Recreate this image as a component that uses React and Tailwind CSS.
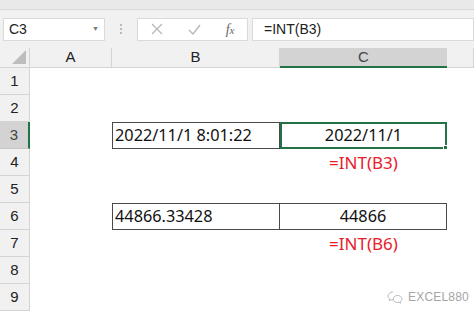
import { useState } from "react";

const rows = [1, 2, 3, 4, 5, 6, 7, 8, 9];

export default function App() {
    const [name] = useState("C3");

    const cell = (r, col) => {
        if (col === "B" && r === 3)
            return <div className="h-full border border-[#4a4a4a] flex items-center pl-[2px]">2022/11/1 8:01:22</div>;
        if (col === "C" && r === 3)
            return (
                <div className="relative h-full border-2 border-[#217346] flex items-center justify-center">
                    2022/11/1
                    <span className="absolute -right-[3px] -bottom-[3px] w-[5px] h-[5px] bg-[#217346] border border-white" />
                </div>
            );
        if (col === "B" && r === 6)
            return <div className="h-full border border-[#4a4a4a] flex items-center pl-[2px]">44866.33428</div>;
        if (col === "C" && r === 6)
            return <div className="h-full border border-l-0 border-[#4a4a4a] flex items-center justify-center">44866</div>;
        if (col === "C" && r === 4)
            return <div className="h-full flex items-center justify-center text-[#e8202a] text-[17px]">=INT(B3)</div>;
        if (col === "C" && r === 7)
            return <div className="h-full flex items-center justify-center text-[#e8202a] text-[17px]">=INT(B6)</div>;
        return null;
    };

    return (
        <div className="relative w-[474px] h-[315px] overflow-hidden bg-white flex flex-col" style={{ fontFamily: '"Liberation Sans", Arial, sans-serif' }}>
            {/* toolbar */}
            <div className="h-[10px] bg-[#e9e9e9] border-b border-[#d8d8d8]" />
            <div className="h-[38px] bg-[#f1f1f1] flex items-center pl-[3px] gap-0">
                <div className="w-[102px] h-[23px] bg-white border border-[#dadada] flex items-center justify-between px-[5px] text-[14px] text-[#222]">
                    <span>{name}</span>
                    <span className="text-[7px] text-[#777]">▼</span>
                </div>
                <div className="w-[32px] flex flex-col items-center gap-[2px]">
                    <span className="w-[2px] h-[2px] bg-[#bbb]" />
                    <span className="w-[2px] h-[2px] bg-[#bbb]" />
                    <span className="w-[2px] h-[2px] bg-[#bbb]" />
                </div>
                <div className="w-[111px] h-[23px] bg-white border border-[#dadada] flex items-center justify-around text-[#a8a8a8]">
                    <svg width="12" height="12" viewBox="0 0 12 12" fill="none" stroke="#b5b5b5" strokeWidth="1.2"><path d="M1 1L11 11M11 1L1 11" /></svg>
                    <svg width="13" height="11" viewBox="0 0 13 11" fill="none" stroke="#b5b5b5" strokeWidth="1.3"><path d="M1 6L5 10L12 1" /></svg>
                    <span className="italic text-[14px] text-[#666]" style={{ fontFamily: '"Liberation Serif", serif' }}>f<span className="text-[11px]">x</span></span>
                </div>
                <div className="ml-[4px] flex-1 h-[23px] bg-white border border-[#dadada] flex items-center pl-[11px] text-[14px] text-[#222]">=INT(B3)</div>
            </div>

            {/* sheet */}
            <div className="grid grid-cols-[30px_82px_168px_167px_1fr] grid-rows-[20px_repeat(9,27px)] text-[16.3px] text-[#111]" style={{ fontFamily: '"Noto Sans", "Noto Sans CJK SC", sans-serif' }}>
                <div className="bg-[#f1f1f1] border-r border-b border-[#d4d4d4] relative">
                    <svg className="absolute right-[3px] bottom-[3px]" width="14" height="14" viewBox="0 0 14 14"><path d="M14 0V14H0Z" fill="#bdbdbd" /></svg>
                </div>
                {["A", "B", "C", ""].map((c) => (
                    <div
                        key={c || "D"}
                        className={
                            c === "C"
                                ? "bg-[#d3d3d3] border-b-2 border-[#217346] flex items-center justify-center text-[15px] text-[#444]"
                                : "bg-[#f1f1f1] border-r border-b border-[#d4d4d4] flex items-center justify-center text-[15px] text-[#222]"
                        }
                        style={{ fontFamily: '"Liberation Sans", Arial, sans-serif' }}
                    >
                        {c}
                    </div>
                ))}
                {rows.map((r) => (
                    <Row key={r} r={r} cell={cell} />
                ))}
            </div>

            {/* watermark */}
            <div className="absolute left-[387px] top-[288px] flex items-center gap-[5px] text-[12px] text-[#a5a5a5]" style={{ fontFamily: '"Liberation Sans", Arial, sans-serif' }}>
                <svg width="16" height="13" viewBox="0 0 16 13" fill="none" stroke="#b0b0b0" strokeWidth="0.9">
                    <path d="M6 1C3 1 1 3 1 5C1 6.3 1.7 7.3 2.7 8L2.3 9.6L4.2 8.7C4.8 8.9 5.4 9 6 9" />
                    <path d="M10.5 4.5C8 4.5 6.2 6.1 6.2 8C6.2 9.9 8 11.5 10.5 11.5C11 11.5 11.5 11.4 12 11.3L13.6 12.1L13.2 10.7C14.3 10 15 9.1 15 8C15 6.1 13 4.5 10.5 4.5Z" />
                </svg>
                <span className="tracking-[0.2px]">EXCEL880</span>
            </div>
        </div>
    );
}

function Row({ r, cell }) {
    return (
        <>
            <div
                className={
                    r === 3
                        ? "bg-[#d3d3d3] border-r-2 border-b border-r-[#217346] border-b-[#c8c8c8] flex items-center justify-center text-[15px] text-[#444]"
                        : "bg-[#f1f1f1] border-r border-b border-[#d4d4d4] flex items-center justify-center text-[15px] text-[#222]"
                }
                style={{ fontFamily: '"Liberation Sans", Arial, sans-serif' }}
            >
                {r}
            </div>
            <div>{cell(r, "A")}</div>
            <div>{cell(r, "B")}</div>
            <div>{cell(r, "C")}</div>
            <div />
        </>
    );
}
